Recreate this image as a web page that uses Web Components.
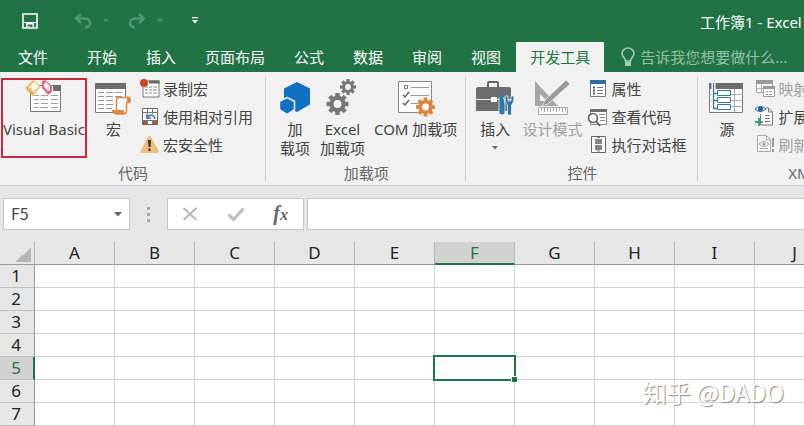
<!DOCTYPE html>
<html lang="zh-CN">
<head>
<meta charset="utf-8">
<title>工作簿1 - Excel</title>
<style>
    html { height: 100%; }
    body {
        margin: 0;
        min-height: 100%;
        overflow: hidden;
        background: #e6e6e6;
        font-family: "Noto Sans", "Noto Sans CJK SC", sans-serif;
        font-size: 15px;
        color: #444;
    }
</style>
</head>
<body>
<excel-window>
    <title-bar slot="title">工作簿1 - Excel</title-bar>

    <tab-strip slot="tabs">
        <ribbon-tab file>文件</ribbon-tab>
        <ribbon-tab>开始</ribbon-tab>
        <ribbon-tab>插入</ribbon-tab>
        <ribbon-tab>页面布局</ribbon-tab>
        <ribbon-tab>公式</ribbon-tab>
        <ribbon-tab>数据</ribbon-tab>
        <ribbon-tab>审阅</ribbon-tab>
        <ribbon-tab>视图</ribbon-tab>
        <ribbon-tab selected>开发工具</ribbon-tab>
        <tell-me></tell-me>
    </tab-strip>

    <ribbon-group slot="ribbon" label="代码" style="--gap: 6px; --pad: 0 13px 0 1px">
        <big-button icon="vb" marked>Visual Basic</big-button>
        <big-button icon="macro">宏</big-button>
        <button-stack>
            <small-button icon="record">录制宏</small-button>
            <small-button icon="relative">使用相对引用</small-button>
            <small-button icon="warning">宏安全性</small-button>
        </button-stack>
    </ribbon-group>
    <ribbon-group slot="ribbon" label="加载项" style="--gap: 5px; --pad: 0 7px 0 11px">
        <big-button icon="addins">加<br>载项</big-button>
        <big-button icon="gears">Excel<br>加载项</big-button>
        <big-button icon="com">COM 加载项</big-button>
    </ribbon-group>
    <ribbon-group slot="ribbon" label="控件" style="--pad: 0 12px 0 8px">
        <big-button icon="toolbox" menu>插入</big-button>
        <big-button icon="design" disabled>设计模式</big-button>
        <button-stack>
            <small-button icon="props">属性</small-button>
            <small-button icon="code">查看代码</small-button>
            <small-button icon="dialog">执行对话框</small-button>
        </button-stack>
    </ribbon-group>
    <ribbon-group slot="ribbon" label="XML" style="--gap: 9px; --pad: 0 70px 0 9px">
        <big-button icon="source">源</big-button>
        <button-stack>
            <small-button icon="map" disabled>映射属性</small-button>
            <small-button icon="expand">扩展包</small-button>
            <small-button icon="refresh" disabled>刷新数据</small-button>
        </button-stack>
    </ribbon-group>

    <formula-bar slot="formula" cell="F5"></formula-bar>
    <sheet-grid slot="sheet" cell="F5"></sheet-grid>
    <water-mark slot="sheet">知乎 @DADO</water-mark>
</excel-window>

<script>
(function () {
    'use strict'

    const gear = (cx, cy, r, fill, hole) => {
        let teeth = '';
        for (let i = 0; i < 8; i++) {
            teeth += `<rect x="${cx - r * .2}" y="${cy - r}" width="${r * .4}" height="${r}" transform="rotate(${i * 45} ${cx} ${cy})"/>`;
        }
        return `<g fill="${fill}">${teeth}<circle cx="${cx}" cy="${cy}" r="${r * .74}"/></g><circle cx="${cx}" cy="${cy}" r="${r * .36}" fill="${hole}"/>`;
    };

    // name: [width, height, markup]
    const ICONS = {
        save: [16, 16, `<path d="M1 1h14v14H1z" fill="none" stroke="#fff" stroke-width="1.600"/><path d="M2 9h12v1H2zM4 10h1.500v5H4zM4 10h8v1.500H4zM10.500 10H12v5h-1.500zM6.500 13H8v2H6.500z" fill="#fff"/>`],
        undo: [18, 16, `<path d="M2 5.500h9a5 4.500 0 0 1 0 9M7 1L2 5.500 7 10" fill="none" stroke="#4f9670" stroke-width="2.600"/>`],
        redo: [18, 16, `<path d="M16 5.500H7a5 4.500 0 0 0 0 9M11 1l5 4.500L11 10" fill="none" stroke="#4f9670" stroke-width="2.600"/>`],
        arrow: [6, 4, `<path d="M0 0h6L3 3.500z" fill="currentColor"/>`],
        arrowbig: [8, 5, `<path d="M0 0h8L4 4.500z" fill="currentColor"/>`],
        custom: [6, 8, `<path d="M0 0h6v1.300H0zM0 3h6L3 6.500z" fill="#fff"/>`],
        bulb: [14, 20, `<path d="M4.500 14c0-3-3.500-4-3.500-7.500a6 5.500 0 0 1 12 0c0 3.500-3.500 4.500-3.500 7.500z" fill="none" stroke="#a3cbb3" stroke-width="1.700"/><path d="M4 15h6v4H4z" fill="#a3cbb3"/>`],
        vb: [37, 36, `<path d="M5.500 6.500h30v26h-30z" fill="#fff" stroke="#777"/><path d="M28 6h8v6h-8z" fill="#6d6d6d"/>
            <path d="M9 16.500h5m2 0h7m3 0h7M9 20.500h5m2 0h7m3 0h7M9 24.500h5m2 0h7m3 0h7M9 28.500h5m2 0h7m3 0h7" stroke="#a0a0a0"/>
            <path d="M0 9l8-8 8 6-8 10z" fill="#e9bd6c"/><path d="M4 8l5-5 5 4-5 6z" fill="#fffaf0"/><path d="M0 9l8 5v3z" fill="#dca850"/>
            <path d="M17 2l3-1 7 6v6l-4 3-6-7z" fill="#d4708b"/><path d="M19 5l2-2 4 4v4l-2 1-4-4z" fill="#f9e5ea"/>`],
        macro: [37, 36, `<path d="M.5 4.500h30v29H.5z" fill="#fff" stroke="#777"/><path d="M0 4h31v6H0z" fill="#6d6d6d"/>
            <path d="M3 13.500h6m2 0h7m2 0h7M3 17.500h6m2 0h7m2 0h7M3 21.500h6m2 0h7M3 25.500h6m2 0h7M3 29.500h6m2 0h6" stroke="#999"/>
            <path d="M21.500 31V20c0-1 .5-1.500 2-1.500h11v5h-3V32c0 2-1 3-3 3h-7z" fill="#fff" stroke="#dc8743" stroke-width="1.500"/><path d="M32 19h2q2 0 2 2v2h-4zM18 31h11c0 2 1 4 2 4H20q-3 0-3-4z" fill="#dc8743"/>`],
        record: [20, 20, `<path d="M3 2h16v16H3z" fill="#fff" stroke="#777"/><path d="M9 1.500h10.500v3H9z" fill="#666"/><path d="M5 8h3m1 0h3m1 0h4M5 11h3m1 0h3m1 0h4M5 14h3m1 0h3m1 0h4" stroke="#888"/><circle cx="4" cy="4" r="4" fill="#d04526"/>`],
        relative: [20, 20, `<path d="M2.500 1.500h15v16h-15z" fill="#fff" stroke="#666"/><path d="M7.500 2v15M12.500 2v15M3 5.500h14M3 13.500h14" stroke="#777"/><path d="M4 7h12v6H4z" fill="#fff"/><path d="M3 14h4v3H3zM13 14h4v3h-4z" fill="#b5503a"/><path d="M7 7v4h4M7 11c3-5 7-3 8 1" fill="none" stroke="#2d72ad" stroke-width="1.500"/>`],
        warning: [20, 20, `<path d="M9.500 1q1 0 1.500 1l8 14q.5 2-1 2H1.500Q-.5 18 .5 16L8 2q.5-1 1.500-1z" fill="#ecc07c"/><path d="M8 5h3l-.5 7h-2zM8.500 13.500h2v2.500h-2z" fill="#333"/>`],
        addins: [32, 36, `<path d="M18 3l13 6.500v16L18 33 5 25.500v-16z" fill="#1070c2"/><path d="M8 18.500l7.500 3.800v8.400L8 35.500l-7.500-4.800v-8.400z" fill="#1070c2" stroke="#f1f1f1" stroke-width="1.500"/>`],
        gears: [32, 36, gear(22, 8, 8, '#777', '#f1f1f1') + gear(11.500, 25, 11, '#777', '#f1f1f1')],
        com: [40, 36, `<path d="M2.500 2.500h33v31h-33z" fill="#fafafa" stroke="#888"/><path d="M8.500 6.500h3v3h-3z" fill="none" stroke="#777"/><path d="M15 8.500h18M15 16.500h18M15 24.500h8" stroke="#999"/><path d="M7 16l2 2 4-5M7 24l2 2 4-5" fill="none" stroke="#666" stroke-width="1.500"/>` + gear(29.500, 28, 9.500, '#dd843f', '#fff')],
        toolbox: [38, 36, `<path d="M11 8V4q0-2 2-2h8q2 0 2 2v4h-2V4h-8v4z" fill="#666"/><path d="M2 8h31q2 0 2 2v10H0V10q0-2 2-2zM0 21h35v11H0z" fill="#6d6d6d"/><path d="M15 18h6v5h-6z" fill="#fff"/>
            <path d="M23 19h5l1 8v7q-3 4-6 0v-7zM29 17q0 7 2.500 9v10h4V26Q38 24 38 17h-3v5h-3v-5z" fill="#2f75b0" stroke="#f1f1f1" stroke-width=".8"/><path d="M24 15h3v6h-3z" fill="#2f75b0"/>`],
        design: [38, 36, `<path d="M2 2l23 25H2zM7 15v7h7z" fill="#a5a5a5" fill-rule="evenodd"/><path d="M33 1l4 4-22 20-6 2 3-6z" fill="#999" stroke="#f1f1f1" stroke-width=".7"/><path d="M5.500 28.500h29v7h-29z" fill="#f8f8f8" stroke="#aaa"/><path d="M8.500 29v3M11.500 29v4M14.500 29v3M17.500 29v4M20.500 29v3M23.500 29v4M26.500 29v3M29.500 29v4M32.500 29v3" stroke="#aaa"/>`],
        props: [20, 20, `<path d="M2.500 1.500h15v16h-15z" fill="#fff" stroke="#777"/><path d="M2 1h16v4H2z" fill="#2f6ca5"/><path d="M9 8.500h6M9 11.500h6M9 14.500h6" stroke="#777"/><path d="M5 7.500h2v2H5zM5 10.500h2v2H5zM5 13.500h2v2H5z" fill="#555"/>`],
        code: [20, 20, `<path d="M2.500 2.500h16v15h-16z" fill="#fff" stroke="#888"/><path d="M2 2h17v3H2z" fill="#6d6d6d"/><path d="M11 7.500h6M12 10.500h5M12 13.500h5" stroke="#888"/><circle cx="5" cy="11" r="4.500" fill="#fff" stroke="#666" stroke-width="1.700"/><path d="M8 14l4 5" stroke="#666" stroke-width="2"/>`],
        dialog: [20, 20, `<path d="M3.500 1.500h14v16h-14z" fill="#fff" stroke="#666"/><path d="M7 4h7v5H7zM7 10h7v5H7z" fill="#858585"/><path d="M9 2.500h3M9 16h3" stroke="#777"/>`],
        source: [35, 36, `<path d="M.5 4.500h33v29H.5z" fill="#fff" stroke="#777"/><path d="M0 4h34v6H0z" fill="#6d6d6d"/><path d="M0 15.500h34M0 21.500h34M0 27.500h34M25.500 10v23" stroke="#aaa"/><path d="M4.500 4v25.500H9M4.500 14.500H9M4.500 21.500H9" fill="none" stroke="#fff" stroke-width="4"/><path d="M4.500 4v25.500H9M4.500 14.500H9M4.500 21.500H9" fill="none" stroke="#3b7890" stroke-width="1.300"/><path d="M8.500 11.500h13v5h-13zM8.500 18.500h13v5h-13zM8.500 25.500h13v5h-13z" fill="#fff" stroke="#3b7890"/>`],
        map: [20, 20, `<path d="M1.500 1.500h16v12h-16z" fill="#f5f5f5" stroke="#a5a5a5"/><path d="M1 1h17v4H1z" fill="#9a9a9a"/><path d="M2 9.500h15M6.500 5v8" stroke="#b5b5b5"/><path d="M8.500 7.500h11v10h-11z" fill="#fff" stroke="#999"/><path d="M8 7h12v3H8z" fill="#999"/><path d="M11 12.500h2m1 0h3M11 15.500h2m1 0h3" stroke="#999"/>`],
        expand: [20, 20, `<path d="M5.500 7V18h12V5l-4-4H11" fill="#fff" stroke="#777"/><path d="M13.500 1v4h4M10 8.500h5M10 11.500h5M10 14.500h5" fill="none" stroke="#777"/><path d="M0 2q5-5 11 0-6 5-11 0z" fill="#dceaf5" stroke="#316b99"/><circle cx="5.500" cy="2" r="2.500" fill="#2d638f"/><path d="M3 11h2v3h3v2H5v3H3v-3H0v-2h3z" fill="#4d9b7a"/>`],
        refresh: [20, 20, `<path d="M2.500 .5h9l4 4v12h-13z" fill="#f5f5f5" stroke="#aaa"/><path d="M11.500 1v4h4M4 9q5-5 10 0-5 5-10 0zM5 13.500h8" fill="none" stroke="#aaa"/><circle cx="9" cy="9" r="1.500" fill="#999"/><path d="M17 3h2v9h-2zM17 14h2v3h-2z" fill="#999"/>`],
        cancel: [16, 14, `<path d="M1.500 1l13 12M14.500 1l-13 12" stroke="#bdbdbd" stroke-width="2.300"/>`],
        accept: [18, 14, `<path d="M1.500 7.500l5 5 10-11" fill="none" stroke="#bdbdbd" stroke-width="3"/>`],
        dots: [3, 15, `<path d="M0 0h3v3H0zM0 6h3v3H0zM0 12h3v3H0z" fill="#aaa"/>`]
    };

    const buttonReset = `
        button {
            display: block;
            margin: 0;
            padding: 0;
            border: 0;
            background: none;
            color: inherit;
            font: inherit;
        }
    `;

    class BaseElement extends HTMLElement {
        constructor() {
            super();
            this._shadow = this.attachShadow({ mode: 'open' });
        }

        connectedCallback() {
            this._shadow.innerHTML = this.template();
        }
    }

    class UiIcon extends BaseElement {
        template() {
            const [w, h, body] = ICONS[this.getAttribute('name')];
            return `
                <style>:host { display: block; flex: none; } svg { display: block; overflow: visible; }</style>
                <svg width="${w}" height="${h}" viewBox="0 0 ${w} ${h}" aria-hidden="true">${body}</svg>
            `;
        }
    }

    class ExcelWindow extends BaseElement {
        template() {
            return `
                <style>
                    :host { display: flex; flex-direction: column; min-height: 100vh; }
                    header { background: #217346; color: #fff; }
                    .ribbon {
                        display: flex;
                        overflow: hidden;
                        background: #f1f1f1;
                        border-bottom: 1px solid #d0d0d0;
                    }
                    main { position: relative; flex: 1; overflow: hidden; background: #fff; }
                </style>
                <header>
                    <slot name="title"></slot>
                    <slot name="tabs"></slot>
                </header>
                <div class="ribbon"><slot name="ribbon"></slot></div>
                <slot name="formula"></slot>
                <main><slot name="sheet"></slot></main>
            `;
        }
    }

    class TitleBar extends BaseElement {
        template() {
            return `
                <style>
                    ${buttonReset}
                    :host { display: flex; align-items: center; height: 42px; padding-left: 22px; overflow: hidden; }
                    .tools { display: flex; align-items: center; }
                    .split { display: flex; align-items: center; gap: 11px; color: #4f9670; }
                    .save { margin-right: 36px; }
                    .split { margin-right: 19px; }
                    .last { margin-left: 10px; }
                    .title { flex: none; width: 104px; margin-left: auto; white-space: nowrap; }
                </style>
                <div class="tools">
                    <button class="save" aria-label="保存"><ui-icon name="save"></ui-icon></button>
                    <button class="split" aria-label="撤消"><ui-icon name="undo"></ui-icon><ui-icon name="arrow"></ui-icon></button>
                    <button class="split" aria-label="恢复"><ui-icon name="redo"></ui-icon><ui-icon name="arrow"></ui-icon></button>
                    <button class="last" aria-label="自定义快速访问工具栏"><ui-icon name="custom"></ui-icon></button>
                </div>
                <div class="title"><slot></slot></div>
            `;
        }
    }

    class TabStrip extends BaseElement {
        template() {
            return `
                <style>:host { display: flex; gap: 1px; height: 30px; }</style>
                <slot></slot>
            `;
        }
    }

    class RibbonTab extends BaseElement {
        template() {
            return `
                <style>
                    ${buttonReset}
                    :host { display: block; flex: none; }
                    :host([file]) { margin-right: 6px; }
                    button { height: 30px; padding: 0 14px; line-height: 28px; white-space: nowrap; }
                    :host([file]) button { padding: 0 18px; }
                    :host([selected]) button { background: #f1f1f1; color: #217346; }
                </style>
                <button><slot></slot></button>
            `;
        }
    }

    class TellMe extends BaseElement {
        template() {
            return `
                <style>
                    :host { display: flex; flex: 1; align-items: center; gap: 5px; padding-left: 16px; }
                    input {
                        flex: 1;
                        min-width: 0;
                        padding: 0;
                        border: 0;
                        outline: 0;
                        background: none;
                        color: #fff;
                        font: inherit;
                    }
                    input::placeholder { color: #92c0a4; opacity: 1; }
                </style>
                <ui-icon name="bulb"></ui-icon>
                <input type="text" aria-label="告诉我您想要做什么" placeholder="告诉我您想要做什么...">
            `;
        }
    }

    class RibbonGroup extends BaseElement {
        template() {
            return `
                <style>
                    :host {
                        display: flex;
                        flex: none;
                        flex-direction: column;
                        height: 113px;
                        background: linear-gradient(#d0d0d0, #d0d0d0) right 0 top 5px / 1px 104px no-repeat;
                    }
                    .body { display: flex; flex: 1; gap: var(--gap, 4px); padding: var(--pad, 0); }
                    .label { height: 24px; line-height: 24px; text-align: center; color: #666; }
                </style>
                <div class="body"><slot></slot></div>
                <div class="label">${this.getAttribute('label')}</div>
            `;
        }
    }

    class BigButton extends BaseElement {
        template() {
            const menu = this.hasAttribute('menu') ? '<ui-icon class="menu" name="arrow"></ui-icon>' : '';
            return `
                <style>
                    ${buttonReset}
                    :host { display: block; flex: none; padding-top: 6px; }
                    button {
                        display: flex;
                        flex-direction: column;
                        align-items: center;
                        height: 80px;
                        padding: 1px 2px;
                        line-height: 19px;
                        white-space: nowrap;
                    }
                    .text { margin-top: 5px; }
                    .menu { margin-top: 7px; color: #666; }
                    :host([marked]) button { box-shadow: inset 0 0 0 2px #c8283c; }
                    :host([disabled]) button { color: #a0a0a0; }
                </style>
                <button${this.hasAttribute('disabled') ? ' disabled' : ''}>
                    <ui-icon name="${this.getAttribute('icon')}"></ui-icon>
                    <span class="text"><slot></slot></span>
                    ${menu}
                </button>
            `;
        }
    }

    class ButtonStack extends BaseElement {
        template() {
            return `
                <style>:host { display: flex; flex-direction: column; padding-top: 3px; }</style>
                <slot></slot>
            `;
        }
    }

    class SmallButton extends BaseElement {
        template() {
            return `
                <style>
                    ${buttonReset}
                    :host { display: block; }
                    button {
                        display: flex;
                        align-items: center;
                        gap: 3px;
                        height: 28px;
                        line-height: 20px;
                        white-space: nowrap;
                    }
                    :host([disabled]) button { color: #a0a0a0; }
                </style>
                <button${this.hasAttribute('disabled') ? ' disabled' : ''}>
                    <ui-icon name="${this.getAttribute('icon')}"></ui-icon>
                    <span><slot></slot></span>
                </button>
            `;
        }
    }

    class FormulaBar extends BaseElement {
        template() {
            return `
                <style>
                    ${buttonReset}
                    :host { display: flex; align-items: center; padding: 12px 0 12px 3px; }
                    .box {
                        display: flex;
                        align-items: center;
                        box-sizing: border-box;
                        height: 32px;
                        border: 1px solid #c6c6c6;
                        background: #fff;
                    }
                    .name { width: 127px; padding: 0 7px; color: #666; }
                    .tools { width: 137px; justify-content: space-between; padding: 0 15px 0 14px; margin-right: 3px; }
                    .formula { flex: 1; border-right: 0; }
                    .grip { margin: 0 17px; }
                    input {
                        flex: 1;
                        min-width: 0;
                        height: 100%;
                        box-sizing: border-box;
                        padding: 0 0 2px;
                        border: 0;
                        outline: 0;
                        background: none;
                        color: #444;
                        font: 16px "Noto Sans CJK SC", sans-serif;
                    }
                    .fx { font: italic bold 20px/24px "Liberation Serif", serif; color: #666; }
                    .fx small { font-size: 16px; }
                </style>
                <div class="box name">
                    <input type="text" aria-label="名称框" value="${this.getAttribute('cell')}">
                    <button aria-label="名称列表"><ui-icon name="arrowbig"></ui-icon></button>
                </div>
                <ui-icon class="grip" name="dots"></ui-icon>
                <div class="box tools">
                    <button aria-label="取消"><ui-icon name="cancel"></ui-icon></button>
                    <button aria-label="输入"><ui-icon name="accept"></ui-icon></button>
                    <button class="fx" aria-label="插入函数">f<small>x</small></button>
                </div>
                <div class="box formula"><input type="text" aria-label="编辑栏"></div>
            `;
        }
    }

    class SheetGrid extends BaseElement {
        template() {
            const cell = this.getAttribute('cell');
            const active = cell.charCodeAt(0) - 65;
            const activeRow = Number(cell.slice(1));
            // only as many cells as the window can show
            const cols = Math.min(26, Math.ceil((window.innerWidth - 35) / 80));
            const rows = Math.ceil((window.innerHeight - 265) / 23);

            let head = '';
            for (let c = 0; c < cols; c++) {
                head += `<th scope="col"${c === active ? ' class="on"' : ''}>${String.fromCharCode(65 + c)}</th>`;
            }

            let body = '';
            for (let r = 1; r <= rows; r++) {
                body += `<tr><th scope="row"${r === activeRow ? ' class="on"' : ''}>${r}</th>`;
                for (let c = 0; c < cols; c++) {
                    body += r === activeRow && c === active ? '<td class="active"></td>' : '<td></td>';
                }
                body += '</tr>';
            }

            return `
                <style>
                    :host { display: block; }
                    table { width: ${35 + cols * 80}px; table-layout: fixed; border-collapse: separate; border-spacing: 0; }
                    th, td {
                        box-sizing: border-box;
                        height: 23px;
                        padding: 0;
                        border: solid #d0d0d0;
                        border-width: 0 1px 1px 0;
                    }
                    th { background: #e6e6e6; color: #222; font-size: 17px; font-weight: 400; line-height: 22px; }
                    thead th { border-right-color: #b5b5b5; border-bottom-color: #999; }
                    tbody th { padding-right: 2px; border-right-color: #999; border-bottom-color: #bdbdbd; }
                    th.on { background: #d2d2d2; color: #217346; }
                    thead th.on { border-bottom: 2px solid #217346; line-height: 21px; }
                    tbody th.on { padding-right: 1px; border-right: 2px solid #217346; }
                    .corner { width: 35px; }
                    .corner::after {
                        content: "";
                        display: block;
                        width: 15px;
                        height: 15px;
                        margin: 3px 3px 0 auto;
                        background: linear-gradient(135deg, transparent 50%, #b5b5b5 50%);
                    }
                    .active { position: relative; }
                    .active::before {
                        content: "";
                        position: absolute;
                        inset: -2px;
                        border: 2px solid #217346;
                    }
                    .active::after {
                        content: "";
                        position: absolute;
                        right: -3px;
                        bottom: -3px;
                        width: 5px;
                        height: 5px;
                        border: solid #fff;
                        border-width: 1px 0 0 1px;
                        background: #217346;
                    }
                </style>
                <table>
                    <thead><tr><th class="corner"></th>${head}</tr></thead>
                    <tbody>${body}</tbody>
                </table>
            `;
        }
    }

    class WaterMark extends BaseElement {
        template() {
            return `
                <style>
                    :host {
                        position: absolute;
                        right: 20px;
                        bottom: 17px;
                        color: #fff;
                        font: 24px/34px "Noto Sans CJK SC", sans-serif;
                        text-shadow: 1px 1px 1px #888;
                        pointer-events: none;
                    }
                </style>
                <slot></slot>
            `;
        }
    }

    customElements.define('ui-icon', UiIcon);
    customElements.define('excel-window', ExcelWindow);
    customElements.define('title-bar', TitleBar);
    customElements.define('tab-strip', TabStrip);
    customElements.define('ribbon-tab', RibbonTab);
    customElements.define('tell-me', TellMe);
    customElements.define('ribbon-group', RibbonGroup);
    customElements.define('big-button', BigButton);
    customElements.define('button-stack', ButtonStack);
    customElements.define('small-button', SmallButton);
    customElements.define('formula-bar', FormulaBar);
    customElements.define('sheet-grid', SheetGrid);
    customElements.define('water-mark', WaterMark);

})();
</script>
</body>
</html>
